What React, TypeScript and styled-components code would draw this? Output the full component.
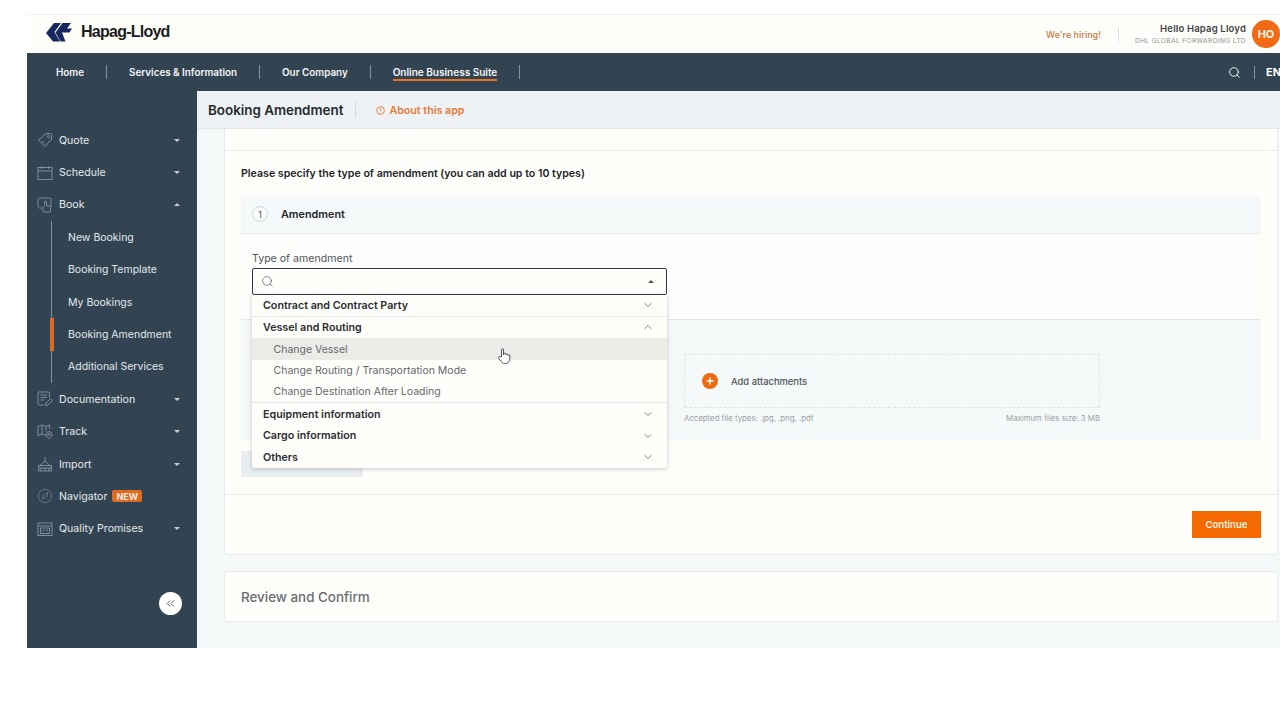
import React from "react";
import styled, { createGlobalStyle } from "styled-components";
import { ChevronDown, ChevronUp, ChevronsLeft, Compass, Search } from "lucide-react";

const GlobalStyle = createGlobalStyle`
  html, body {
    margin: 0;
    padding: 0;
    background: #ffffff;
    overflow: hidden;
  }
  * {
    box-sizing: border-box;
  }
  body {
    font-family: Inter, "Liberation Sans", sans-serif;
  }
`;

const Frame = styled.div`
  width: 1253px;
  height: 634px;
  margin: 14px 0 0 27px;
  display: flex;
  flex-direction: column;
  overflow: hidden;
  border-top: 1px solid #eff0f0;
  background: #f5f8f9;
`;

const TopBar = styled.header`
  height: 38px;
  flex: none;
  display: flex;
  align-items: center;
  padding-left: 19px;
  background: #fffefb;
`;

const Brand = styled.div`
  display: flex;
  align-items: center;
  gap: 9px;
  padding-bottom: 4px;
`;

const BrandName = styled.span`
  font-family: "Liberation Sans", Arial, sans-serif;
  font-size: 16px;
  font-weight: 700;
  letter-spacing: -0.75px;
  color: #1b1d20;
`;

const TopRight = styled.div`
  margin-left: auto;
  display: flex;
  align-items: center;
`;

const Hiring = styled.span`
  font-size: 9px;
  font-weight: 500;
  color: #d2763d;
`;

const TopDivider = styled.span`
  width: 1px;
  height: 13px;
  margin: 0 16px 0 17px;
  background: #d9dcdd;
`;

const UserBlock = styled.div`
  display: flex;
  flex-direction: column;
  align-items: flex-end;
  margin-right: 6px;
`;

const Hello = styled.span`
  font-size: 9.5px;
  line-height: 14px;
  font-weight: 600;
  letter-spacing: 0.17px;
  color: #3d4347;
`;

const Company = styled.span`
  font-size: 6.7px;
  line-height: 10px;
  letter-spacing: 0.32px;
  color: #8d9498;
`;

const Avatar = styled.span`
  width: 28px;
  height: 28px;
  border-radius: 50%;
  display: flex;
  align-items: center;
  justify-content: center;
  background: #f26a13;
  color: #fff6ea;
  font-size: 11px;
  font-weight: 700;
`;

const NavBar = styled.nav`
  height: 38px;
  flex: none;
  display: flex;
  align-items: center;
  padding-left: 29px;
  background: #324452;
`;

const NavItem = styled.a<{ $active?: boolean }>`
  position: relative;
  font-size: ${(props) => (props.$active ? "10px" : "9.85px")};
  font-weight: 600;
  color: #f3f5f6;
  white-space: nowrap;
  ${(props) =>
    props.$active &&
    `
    &::after {
      content: "";
      position: absolute;
      left: 0;
      right: 0;
      bottom: -3px;
      height: 2px;
      background: #ee6f1f;
    }
  `}
`;

const NavDivider = styled.span`
  width: 1px;
  height: 14px;
  margin: 0 22px;
  background: #8796a1;
`;

const NavRight = styled.div`
  margin-left: auto;
  display: flex;
  align-items: center;
  width: 52px;
  flex: none;
  color: #f0f3f4;
  svg {
    flex: none;
  }
`;

const NavSearchDivider = styled.span`
  width: 1px;
  height: 13px;
  margin: 0 11px 0 13px;
  background: #8796a1;
  flex: none;
`;

const Lang = styled.span`
  font-size: 11px;
  font-weight: 700;
  color: #ffffff;
`;

const Body = styled.div`
  flex: 1;
  display: flex;
  min-height: 0;
`;

const Sidebar = styled.aside`
  width: 170px;
  flex: none;
  position: relative;
  padding-top: 33px;
  background: #324452;
`;

const MenuRow = styled.div`
  height: 32.4px;
  display: flex;
  align-items: center;
  padding: 0 17px 0 10px;
  font-size: 10.6px;
  color: #e4e9ec;
`;

const MenuIcon = styled.span`
  width: 22px;
  flex: none;
  display: flex;
  align-items: center;
  color: #7f8e99;
`;

const MenuLabel = styled.span`
  white-space: nowrap;
`;

const Caret = styled.span<{ $up?: boolean }>`
  margin-left: auto;
  width: 0;
  height: 0;
  border-left: 3px solid transparent;
  border-right: 3px solid transparent;
  ${(props) =>
    props.$up
      ? "border-bottom: 3px solid #c6ced3;"
      : "border-top: 3px solid #c6ced3;"}
`;

const SelectCaret = styled(Caret)`
  border-bottom-color: #4d555b;
`;

const NewBadge = styled.span`
  margin-left: 5px;
  padding: 0 4px;
  height: 12px;
  display: flex;
  align-items: center;
  border-radius: 2px;
  background: #dd6a1e;
  color: #f7ece2;
  font-size: 9px;
  font-weight: 700;
`;

const SubMenu = styled.div`
  margin-left: 24px;
  border-left: 1px solid #84939e;
`;

const SubRow = styled.div<{ $active?: boolean }>`
  position: relative;
  height: 32.4px;
  display: flex;
  align-items: center;
  padding-left: 16px;
  font-size: 10.5px;
  color: #e4e9ec;
  ${(props) =>
    props.$active &&
    `
    &::before {
      content: "";
      position: absolute;
      left: -2px;
      top: 0;
      width: 4px;
      height: 100%;
      background: #d96a20;
    }
  `}
`;

const CollapseButton = styled.button`
  position: absolute;
  left: 131.500px;
  top: 501px;
  width: 23px;
  height: 23px;
  padding: 0;
  border: none;
  border-radius: 50%;
  display: flex;
  align-items: center;
  justify-content: center;
  background: #ffffff;
  color: #3c4a55;
`;

const Main = styled.main`
  flex: 1;
  min-width: 0;
  display: flex;
  flex-direction: column;
`;

const PageHead = styled.div`
  height: 38px;
  flex: none;
  display: flex;
  align-items: center;
  padding-left: 11px;
  background: #eef2f4;
  border-bottom: 1px solid #e3e7e9;
`;

const PageTitle = styled.h1`
  margin: 0;
  font-size: 13.4px;
  font-weight: 600;
  color: #26292c;
  white-space: nowrap;
`;

const HeadDivider = styled.span`
  width: 1px;
  height: 17px;
  margin: 0 20px 0 12px;
  background: #d8dcde;
`;

const AboutLink = styled.a`
  display: flex;
  align-items: center;
  gap: 4px;
  padding-top: 1px;
  font-size: 10.7px;
  font-weight: 600;
  color: #e67a38;
`;

const Content = styled.div`
  flex: 1;
  padding: 0 2px 0 27px;
  display: flex;
  flex-direction: column;
  gap: 16px;
`;

const Card = styled.section`
  background: #fffefb;
  border: 1px solid #e8ecee;
  border-radius: 3px;
`;

const WorkCard = styled(Card)`
  border-top: none;
  border-radius: 0 0 3px 3px;
`;

const CardTop = styled.div`
  height: 22px;
  border-bottom: 1px solid #e8ecee;
`;

const CardInner = styled.div`
  padding: 0 16px;
`;

const Prompt = styled.p`
  height: 44px;
  margin: 0;
  display: flex;
  align-items: center;
  font-size: 10.6px;
  font-weight: 600;
  color: #22262a;
`;

const SectionHead = styled.div`
  height: 39px;
  display: flex;
  align-items: center;
  gap: 13px;
  padding-left: 11px;
  background: #f6f9f9;
  border-bottom: 1px solid #e6eaea;
`;

const StepBadge = styled.span`
  width: 16px;
  height: 16px;
  border: 1px solid #d3d8da;
  border-radius: 50%;
  display: flex;
  align-items: center;
  justify-content: center;
  font-size: 9px;
  color: #444a4e;
  background: #fbfcfc;
`;

const SectionTitle = styled.span`
  font-size: 10.8px;
  font-weight: 600;
  color: #22262a;
`;

const TypeBlock = styled.div`
  height: 86px;
  padding: 18px 11px 0;
  border-bottom: 1px solid #e3e7e8;
  background: #fdfefc;
`;

const FieldLabel = styled.label`
  display: block;
  height: 16px;
  font-size: 10.6px;
  line-height: 14px;
  color: #51575c;
`;

const SelectWrap = styled.div`
  position: relative;
  width: 415px;
`;

const SelectBox = styled.div`
  height: 27px;
  display: flex;
  align-items: center;
  padding: 0 12px 0 8px;
  border: 1px solid #2f3d49;
  border-radius: 2px;
  background: #fffefb;
  color: #5f676c;
`;

const Dropdown = styled.div`
  position: absolute;
  left: 0;
  right: 0;
  top: 27px;
  z-index: 5;
  background: #fffefb;
  border-radius: 0 0 3px 3px;
  box-shadow: 0 1px 4px rgba(60, 70, 80, 0.3);
`;

const GroupRow = styled.div<{ $divided?: boolean }>`
  height: 21.65px;
  display: flex;
  align-items: center;
  justify-content: space-between;
  padding: 0 13px 0 11px;
  font-size: 10.7px;
  font-weight: 600;
  color: #2a2e32;
  ${(props) => props.$divided && "border-bottom: 1px solid #e8eaea;"}
`;

const OptionRow = styled.div<{ $hover?: boolean; $divided?: boolean }>`
  position: relative;
  height: 21.65px;
  display: flex;
  align-items: center;
  padding-left: 21.500px;
  font-size: 10.5px;
  color: #63696d;
  ${(props) => props.$hover && "background: #ebebe8;"}
  ${(props) => props.$divided && "border-bottom: 1px solid #e6e9ec;"}
`;

const HandCursor = styled.svg`
  position: absolute;
  left: 245px;
  top: 9px;
`;

const AttachBlock = styled.div`
  height: 120px;
  padding: 34px 0 0 443px;
  background: #f6f9f9;
`;

const DropZone = styled.div`
  width: 416px;
  height: 54px;
  display: flex;
  align-items: center;
  gap: 13px;
  padding-left: 17px;
  border: 1px dashed #e0e4e6;
`;

const PlusCircle = styled.span`
  width: 16px;
  height: 16px;
  border-radius: 50%;
  display: flex;
  align-items: center;
  justify-content: center;
  background: #ee6a12;
  color: #fff;
`;

const DropLabel = styled.span`
  font-size: 9.4px;
  font-weight: 500;
  color: #4c5257;
`;

const DropNotes = styled.div`
  width: 416px;
  display: flex;
  justify-content: space-between;
  margin-top: 5px;
  font-size: 7.8px;
  line-height: 11px;
  color: #9aa0a4;
`;

const GhostButton = styled.div`
  width: 122px;
  height: 26px;
  margin: 11px 0 17px;
  background: #e9eef1;
`;

const CardFooter = styled.div`
  height: 60px;
  display: flex;
  align-items: center;
  justify-content: flex-end;
  padding-right: 16px;
  border-top: 1px solid #e8ecee;
`;

const ContinueButton = styled.button`
  width: 69px;
  height: 27px;
  border: none;
  padding: 0;
  background: #f56a00;
  color: #fff3e4;
  font-family: inherit;
  font-size: 9.6px;
  font-weight: 600;
`;

const ReviewCard = styled(Card)`
  height: 51px;
  display: flex;
  align-items: center;
  padding-left: 16px;
  font-size: 13.4px;
  font-weight: 500;
  color: #696e72;
`;

function Logo() {
  return (
    <svg width="26" height="19" viewBox="0 0 26 19" aria-hidden="true">
      <path d="M8 0h7L8.500 9 14 18.500H7L0 10z" fill="#17275f" />
      <path d="M16.500 0H25l-4 5.500h5l-2.500 4H16l3.500 9H14.500l-5-9z" fill="#17275f" />
    </svg>
  );
}

function IconBase({ children }: { children: React.ReactNode }) {
  return (
    <svg width="16" height="16" viewBox="0 0 16 16" fill="none" stroke="currentColor" strokeWidth="1">
      {children}
    </svg>
  );
}

function QuoteIcon() {
  return (
    <IconBase>
      <path d="M9 1.500h4.500a1 1 0 0 1 1 1V7L8 14.500 1.500 8z" />
      <circle cx="11.500" cy="4.500" r="1.200" />
      <path d="M5 9l2.500 2.500" />
    </IconBase>
  );
}

function ScheduleIcon() {
  return (
    <IconBase>
      <rect x="1" y="2.500" width="14" height="12" />
      <path d="M1 6h14M4.500 1v3M11.500 1v3" />
    </IconBase>
  );
}

function BookIcon() {
  return (
    <IconBase>
      <path d="M5 11H2.500A1.500 1.500 0 0 1 1 9.500v-7A1.500 1.500 0 0 1 2.500 1h10A1.500 1.500 0 0 1 14 2.500v7" />
      <path d="M7.500 8V5a1 1 0 0 1 2 0v4H12a1.500 1.500 0 0 1 1.500 1.500V14a1 1 0 0 1-1 1H7a1 1 0 0 1-1-1v-3.500A1.500 1.500 0 0 1 7.500 9" />
    </IconBase>
  );
}

function DocumentationIcon() {
  return (
    <IconBase>
      <path d="M12.500 6.500V2a1 1 0 0 0-1-1H2a1 1 0 0 0-1 1v11a1 1 0 0 0 1 1h5" />
      <path d="M3.500 4h6.500M3.500 6.500h6.500M3.500 9h3.500" />
      <path d="M8.500 14.500l.5-2.500 4.500-4.500 2 2-4.500 4.500z" />
    </IconBase>
  );
}

function TrackIcon() {
  return (
    <IconBase>
      <path d="M9 11.500l-4-1.500-4 1.500v-9L5 1l4 1.500L12.500 1v4M5 1v9M9 2.500v5" />
      <path d="M12 15s-2.800-2.600-2.800-4.600a2.800 2.800 0 0 1 5.600 0C14.800 12.400 12 15 12 15z" />
      <circle cx="12" cy="10.400" r="0.900" />
    </IconBase>
  );
}

function ImportIcon() {
  return (
    <IconBase>
      <path d="M8 1v4M8 5L3 9.500M8 5l5 4.500M1.500 9.500h13v5.500h-13zM1.500 12h13M4 12v3M8 12v3M12 12v3" />
    </IconBase>
  );
}

function QualityIcon() {
  return (
    <IconBase>
      <rect x="1" y="2" width="14" height="12.500" />
      <path d="M1 5h14M3.500 7h9v5.500h-9zM5.500 9.500h2M9 9.500h2" />
    </IconBase>
  );
}

const subItems = [
  "New Booking",
  "Booking Template",
  "My Bookings",
  "Booking Amendment",
  "Additional Services",
];

const groupsAfter = ["Equipment information", "Cargo information", "Others"];

function App() {
  return (
    <>
      <GlobalStyle />
      <Frame>
        <TopBar>
          <Brand>
            <Logo />
            <BrandName>Hapag-Lloyd</BrandName>
          </Brand>
          <TopRight>
            <Hiring>We're hiring!</Hiring>
            <TopDivider />
            <UserBlock>
              <Hello>Hello Hapag Lloyd</Hello>
              <Company>DHL GLOBAL FORWARDING LTD</Company>
            </UserBlock>
            <Avatar>HO</Avatar>
          </TopRight>
        </TopBar>
        <NavBar>
          <NavItem>Home</NavItem>
          <NavDivider />
          <NavItem>Services &amp; Information</NavItem>
          <NavDivider />
          <NavItem>Our Company</NavItem>
          <NavDivider />
          <NavItem $active>Online Business Suite</NavItem>
          <NavDivider />
          <NavRight>
            <Search size={13} strokeWidth={1.8} />
            <NavSearchDivider />
            <Lang>EN</Lang>
          </NavRight>
        </NavBar>
        <Body>
          <Sidebar>
            <MenuRow>
              <MenuIcon>
                <QuoteIcon />
              </MenuIcon>
              <MenuLabel>Quote</MenuLabel>
              <Caret />
            </MenuRow>
            <MenuRow>
              <MenuIcon>
                <ScheduleIcon />
              </MenuIcon>
              <MenuLabel>Schedule</MenuLabel>
              <Caret />
            </MenuRow>
            <MenuRow>
              <MenuIcon>
                <BookIcon />
              </MenuIcon>
              <MenuLabel>Book</MenuLabel>
              <Caret $up />
            </MenuRow>
            <SubMenu>
              {subItems.map((item) => (
                <SubRow key={item} $active={item === "Booking Amendment"}>
                  {item}
                </SubRow>
              ))}
            </SubMenu>
            <MenuRow>
              <MenuIcon>
                <DocumentationIcon />
              </MenuIcon>
              <MenuLabel>Documentation</MenuLabel>
              <Caret />
            </MenuRow>
            <MenuRow>
              <MenuIcon>
                <TrackIcon />
              </MenuIcon>
              <MenuLabel>Track</MenuLabel>
              <Caret />
            </MenuRow>
            <MenuRow>
              <MenuIcon>
                <ImportIcon />
              </MenuIcon>
              <MenuLabel>Import</MenuLabel>
              <Caret />
            </MenuRow>
            <MenuRow>
              <MenuIcon>
                <Compass size={16} strokeWidth={1} />
              </MenuIcon>
              <MenuLabel>Navigator</MenuLabel>
              <NewBadge>NEW</NewBadge>
            </MenuRow>
            <MenuRow>
              <MenuIcon>
                <QualityIcon />
              </MenuIcon>
              <MenuLabel>Quality Promises</MenuLabel>
              <Caret />
            </MenuRow>
            <CollapseButton>
              <ChevronsLeft size={13} strokeWidth={1.6} />
            </CollapseButton>
          </Sidebar>
          <Main>
            <PageHead>
              <PageTitle>Booking Amendment</PageTitle>
              <HeadDivider />
              <AboutLink>
                <svg width="9" height="9" viewBox="0 0 9 9" fill="none" stroke="currentColor" strokeWidth="0.9">
                  <circle cx="4.500" cy="4.500" r="3.900" />
                  <path d="M4.500 2.300v2.600M4.500 5.800v0.800" />
                </svg>
                About this app
              </AboutLink>
            </PageHead>
            <Content>
              <WorkCard>
                <CardTop />
                <CardInner>
                  <Prompt>Please specify the type of amendment (you can add up to 10 types)</Prompt>
                  <SectionHead>
                    <StepBadge>1</StepBadge>
                    <SectionTitle>Amendment</SectionTitle>
                  </SectionHead>
                  <TypeBlock>
                    <FieldLabel>Type of amendment</FieldLabel>
                    <SelectWrap>
                      <SelectBox>
                        <Search size={13} strokeWidth={1.4} />
                        <SelectCaret $up />
                      </SelectBox>
                      <Dropdown>
                        <GroupRow $divided>
                          Contract and Contract Party
                          <ChevronDown size={12} strokeWidth={1.5} color="#4f565b" />
                        </GroupRow>
                        <GroupRow>
                          Vessel and Routing
                          <ChevronUp size={12} strokeWidth={1.5} color="#4f565b" />
                        </GroupRow>
                        <OptionRow $hover>
                          Change Vessel
                          <HandCursor width="14" height="18" viewBox="0 0 14 17" fill="#ffffff" stroke="#3f4347" strokeWidth="0.9">
                            <path d="M4.500 9.500V2.200a1 1 0 0 1 2 0v5l0.300-1.200a1 1 0 0 1 1.700 0.300l0.200 1 0.500-0.700a0.900 0.900 0 0 1 1.600 0.500l0.200 0.700 0.500-0.300a0.900 0.900 0 0 1 1.300 0.800V11.500c0 2.500-1.700 4.500-4.200 4.500H7.500c-1.600 0-2.600-0.800-3.300-2L1.600 10.600a1 1 0 0 1 1.500-1.300z" />
                          </HandCursor>
                        </OptionRow>
                        <OptionRow>Change Routing / Transportation Mode</OptionRow>
                        <OptionRow $divided>Change Destination After Loading</OptionRow>
                        {groupsAfter.map((group) => (
                          <GroupRow key={group}>
                            {group}
                            <ChevronDown size={12} strokeWidth={1.5} color="#4f565b" />
                          </GroupRow>
                        ))}
                      </Dropdown>
                    </SelectWrap>
                  </TypeBlock>
                  <AttachBlock>
                    <DropZone>
                      <PlusCircle>
                        <svg width="8" height="8" viewBox="0 0 8 8" stroke="currentColor" strokeWidth="1.400">
                          <path d="M4 0.500v7M0.500 4h7" />
                        </svg>
                      </PlusCircle>
                      <DropLabel>Add attachments</DropLabel>
                    </DropZone>
                    <DropNotes>
                      <span>Accepted file types: .jpg, .png, .pdf</span>
                      <span>Maximum files size: 3 MB</span>
                    </DropNotes>
                  </AttachBlock>
                  <GhostButton />
                </CardInner>
                <CardFooter>
                  <ContinueButton>Continue</ContinueButton>
                </CardFooter>
              </WorkCard>
              <ReviewCard>Review and Confirm</ReviewCard>
            </Content>
          </Main>
        </Body>
      </Frame>
    </>
  );
}

export default App;
